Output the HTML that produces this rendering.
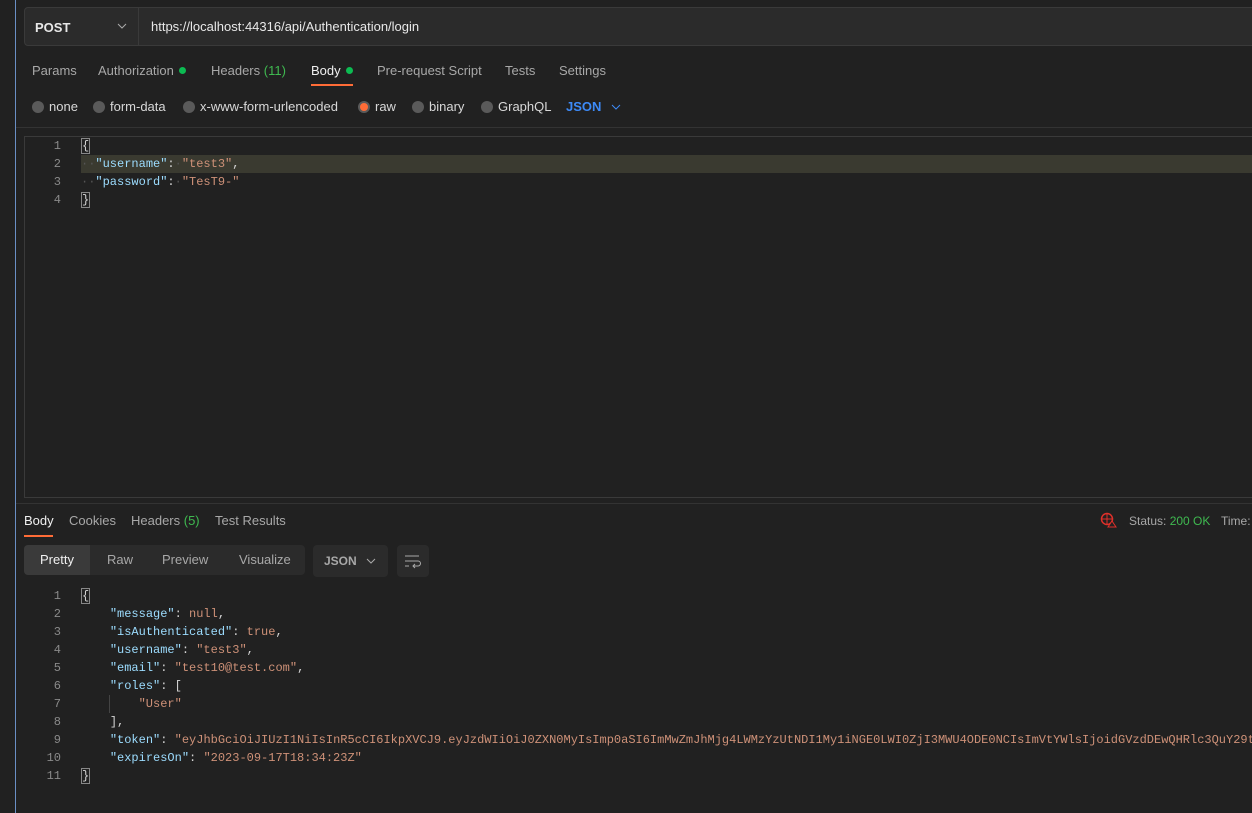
<!DOCTYPE html>
<html><head><meta charset="utf-8"><style>
*{margin:0;padding:0;box-sizing:border-box}
body{width:1252px;height:813px;background:#212121;position:relative;overflow:hidden;font-family:"Liberation Sans",sans-serif;color:#c8c8c8;font-size:13px}
.abs{position:absolute}
.vl{left:15px;top:0;width:1px;height:813px;background:#6a8fc4}
.code{font-family:"Liberation Mono",monospace;font-size:12px;line-height:18px;white-space:pre}
.ln{color:#8a8a8a;text-align:right;width:40px}
.k{color:#9cdcfe}.s{color:#ce9178}.p{color:#d4d4d4}.d{color:#555}
.tab{color:#a8a8a8}
.dot{display:inline-block;width:7px;height:7px;border-radius:50%;background:#0cbb52;margin-left:5px;vertical-align:1px}
.rad{display:inline-block;width:12px;height:12px;border-radius:50%;background:#5a5a5a;margin-right:5px;vertical-align:-2px}
.brk{border:1px solid #888}
</style></head><body>
<div class="abs vl"></div>
<!-- URL bar -->
<div class="abs" style="left:24px;top:7px;width:1240px;height:39px;background:#2b2b2b;border:1px solid #3a3a3a;border-radius:4px"></div>
<div class="abs" style="left:138px;top:8px;width:1px;height:37px;background:#3a3a3a"></div>
<div class="abs" style="left:35px;top:20px;font-weight:bold;color:#e8e8e8">POST</div>
<svg class="abs" style="left:117px;top:22px" width="10" height="8"><path d="M1 2l4 4 4-4" stroke="#aaa" fill="none"/></svg>
<div class="abs" style="left:151px;top:19px;color:#e8e8e8">https://localhost:44316/api/Authentication/login</div>
<!-- tabs -->
<div class="abs tab" style="left:32px;top:63px">Params</div>
<div class="abs tab" style="left:98px;top:63px">Authorization<span class="dot"></span></div>
<div class="abs tab" style="left:211px;top:63px">Headers <span style="color:#3fb950">(11)</span></div>
<div class="abs" style="left:311px;top:63px;color:#f0f0f0">Body<span class="dot"></span></div>
<div class="abs" style="left:311px;top:84px;width:42px;height:2px;background:#ff6c37"></div>
<div class="abs tab" style="left:377px;top:63px">Pre-request Script</div>
<div class="abs tab" style="left:505px;top:63px">Tests</div>
<div class="abs tab" style="left:559px;top:63px">Settings</div>
<!-- radios -->
<div class="abs" style="left:32px;top:99px;color:#d8d8d8"><span class="rad"></span>none</div>
<div class="abs" style="left:93px;top:99px;color:#d8d8d8"><span class="rad"></span>form-data</div>
<div class="abs" style="left:183px;top:99px;color:#d8d8d8"><span class="rad"></span>x-www-form-urlencoded</div>
<div class="abs" style="left:358px;top:99px;color:#d8d8d8"><span class="rad" style="background:#ff6c37;border:2px solid #5a5a5a"></span>raw</div>
<div class="abs" style="left:412px;top:99px;color:#d8d8d8"><span class="rad"></span>binary</div>
<div class="abs" style="left:481px;top:99px;color:#d8d8d8"><span class="rad"></span>GraphQL</div>
<div class="abs" style="left:566px;top:99px;color:#3d8af7;font-weight:bold">JSON</div>
<svg class="abs" style="left:611px;top:103px" width="10" height="8"><path d="M1 2l4 4 4-4" stroke="#3d8af7" fill="none"/></svg>
<div class="abs" style="left:16px;top:127px;width:1240px;height:1px;background:#333"></div>
<!-- editor -->
<div class="abs" style="left:24px;top:136px;width:1240px;height:362px;border:1px solid #3a3a3a"></div>
<div class="abs" style="left:81px;top:155px;width:1175px;height:18px;background:#3a3a30"></div>
<div class="abs code ln" style="left:21px;top:137px">1
2
3
4</div>
<div class="abs code" style="left:81px;top:137px"><span class="p brk">{</span>
<span class="d">··</span><span class="k">"username"</span><span class="p">:</span><span class="d">·</span><span class="s">"test3"</span><span class="p">,</span>
<span class="d">··</span><span class="k">"password"</span><span class="p">:</span><span class="d">·</span><span class="s">"TesT9-"</span>
<span class="p brk">}</span></div>
<div class="abs" style="left:16px;top:503px;width:1240px;height:1px;background:#333"></div>
<!-- response tabs -->
<div class="abs" style="left:24px;top:513px;color:#f0f0f0">Body</div>
<div class="abs" style="left:24px;top:535px;width:29px;height:2px;background:#ff6c37"></div>
<div class="abs tab" style="left:69px;top:513px">Cookies</div>
<div class="abs tab" style="left:131px;top:513px">Headers <span style="color:#3fb950">(5)</span></div>
<div class="abs tab" style="left:215px;top:513px">Test Results</div>
<svg class="abs" style="left:1100px;top:512px" width="18" height="16"><circle cx="7" cy="7" r="5.5" stroke="#e0302a" fill="none" stroke-width="1.5"/><path d="M1.5 7h11M7 1.5v11" stroke="#e0302a"/><path d="M12 9l4 6h-8z" fill="#212121" stroke="#e0302a"/></svg>
<div class="abs" style="left:1129px;top:514px;font-size:12px;color:#a8a8a8">Status: <span style="color:#3fb950">200 OK</span></div>
<div class="abs" style="left:1221px;top:514px;font-size:12px;color:#a8a8a8">Time:</div>
<!-- response toolbar -->
<div class="abs" style="left:24px;top:545px;width:281px;height:30px;background:#2b2b2b;border-radius:4px"></div>
<div class="abs" style="left:24px;top:545px;width:66px;height:30px;background:#3a3a3a;border-radius:4px 0 0 4px"></div>
<div class="abs" style="left:40px;top:552px;color:#f0f0f0">Pretty</div>
<div class="abs tab" style="left:107px;top:552px">Raw</div>
<div class="abs tab" style="left:162px;top:552px">Preview</div>
<div class="abs tab" style="left:239px;top:552px">Visualize</div>
<div class="abs" style="left:313px;top:545px;width:75px;height:32px;background:#2b2b2b;border-radius:4px"></div>
<div class="abs" style="left:324px;top:554px;font-size:12px;font-weight:bold;color:#a8a8a8">JSON</div>
<svg class="abs" style="left:366px;top:557px" width="10" height="8"><path d="M1 2l4 4 4-4" stroke="#aaa" fill="none"/></svg>
<div class="abs" style="left:397px;top:545px;width:32px;height:32px;background:#2b2b2b;border-radius:4px"></div>
<svg class="abs" style="left:403px;top:553px" width="20" height="16"><path d="M2 3h14M2 8h13a2.5 2.5 0 0 1 0 5h-5M2 13h4M12 11l-2 2 2 2" stroke="#aaa" fill="none"/></svg>
<!-- response code -->
<div class="abs" style="left:109px;top:695px;width:1px;height:18px;background:#444"></div>
<div class="abs code ln" style="left:21px;top:587px">1
2
3
4
5
6
7
8
9
10
11</div>
<div class="abs code" style="left:81px;top:587px"><span class="p brk">{</span>
    <span class="k">"message"</span><span class="p">: </span><span class="s">null</span><span class="p">,</span>
    <span class="k">"isAuthenticated"</span><span class="p">: </span><span class="s">true</span><span class="p">,</span>
    <span class="k">"username"</span><span class="p">: </span><span class="s">"test3"</span><span class="p">,</span>
    <span class="k">"email"</span><span class="p">: </span><span class="s">"test10@test.com"</span><span class="p">,</span>
    <span class="k">"roles"</span><span class="p">: [</span>
        <span class="s">"User"</span>
    <span class="p">],</span>
    <span class="k">"token"</span><span class="p">: </span><span class="s">"eyJhbGciOiJIUzI1NiIsInR5cCI6IkpXVCJ9.eyJzdWIiOiJ0ZXN0MyIsImp0aSI6ImMwZmJhMjg4LWMzYzUtNDI1My1iNGE0LWI0ZjI3MWU4ODE0NCIsImVtYWlsIjoidGVzdDEwQHRlc3QuY29t</span>
    <span class="k">"expiresOn"</span><span class="p">: </span><span class="s">"2023-09-17T18:34:23Z"</span>
<span class="p brk">}</span></div>
</body></html>
